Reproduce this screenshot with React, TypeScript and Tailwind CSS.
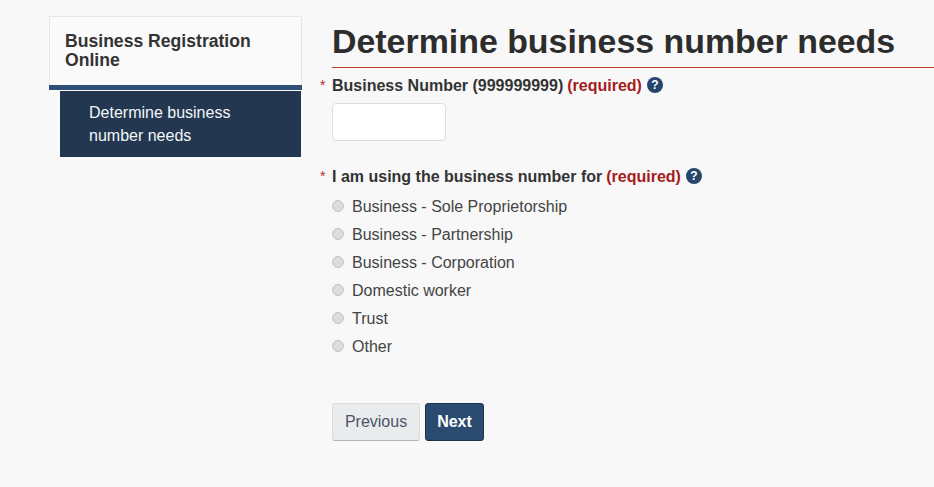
const options = [
  'Business - Sole Proprietorship',
  'Business - Partnership',
  'Business - Corporation',
  'Domestic worker',
  'Trust',
  'Other',
];

function HelpIcon() {
  return (
    <span className="ml-[5px] inline-flex h-[16px] w-[16px] -translate-y-px items-center justify-center rounded-full bg-[#26466d] text-[12px] font-bold leading-none text-white">
      ?
    </span>
  );
}

function Label({ text }: { text: string }) {
  return (
    <div className="relative flex h-[20px] items-center text-[16px] font-bold text-[#333]">
      <span className="absolute -left-[12px] -top-px text-[14px] font-normal text-[#b72a2a]">*</span>
      <span>{text}</span>
      <span className="ml-[4px] text-[#a51c1c]">(required)</span>
      <HelpIcon />
    </div>
  );
}

export default function App() {
  return (
    <div className="flex h-[487px] w-[934px] overflow-hidden bg-[#f8f8f8] font-['Liberation_Sans',Arial,sans-serif]">
      {/* Side nav */}
      <aside className="ml-[49px] mt-[16px] w-[253px] shrink-0">
        <div className="h-[69px] border border-b-0 border-[#e6e6e6] bg-[#fafafa] pl-[15px] pt-[15px] text-[17.6px] font-bold leading-[19px] text-[#333]">
          Business Registration
          <br />
          Online
        </div>
        <div className="h-[5px] bg-[#2f4f77]" />
        <div className="ml-[11px] mr-px mt-px h-[66px] bg-[#233850] pl-[29px] pt-[10px] text-[16px] leading-[23px] text-[#f2f6fa]">
          Determine business
          <br />
          number needs
        </div>
      </aside>

      {/* Form */}
      <main className="ml-[30px] flex-1">
        <h1 className="mt-[21px] h-[46px] text-[33.9px] font-bold leading-[41px] text-[#2d2d2d]">
          Determine business number needs
        </h1>
        <div className="h-px bg-[#c0392b]" />
        <div className="mt-[8px]">
          <Label text="Business Number (999999999)" />
        </div>
        <input
          type="text"
          className="mt-[7px] block h-[38px] w-[114px] rounded-[4px] border border-[#ddd] bg-white"
        />
        <div className="mt-[26px]">
          <Label text="I am using the business number for" />
        </div>
        <div className="mt-[6px] flex flex-col">
          {options.map((o) => (
            <label key={o} className="flex h-[28px] items-center text-[16px] text-[#444]">
              <span className="h-[12px] w-[12px] shrink-0 -translate-y-px rounded-full border border-[#c4c4c4] bg-[#dcdcdc]" />
              <span className="ml-[8px]">{o}</span>
            </label>
          ))}
        </div>
        <div className="mt-[42px] flex gap-[5px]">
          <button className="h-[38px] w-[88px] rounded-[3px] border border-[#dcdcdc] border-b-[#b5b5b5] bg-[#eaebed] text-[16px] text-[#4a5568]">
            Previous
          </button>
          <button className="h-[38px] w-[59px] rounded-[3px] border border-[#1c324d] bg-[#2b4a70] text-[16px] font-bold text-white">
            Next
          </button>
        </div>
      </main>
    </div>
  );
}
